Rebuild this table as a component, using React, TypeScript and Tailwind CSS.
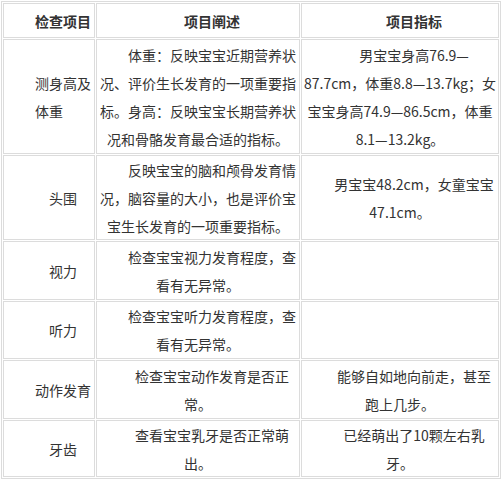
const FONT = { fontFamily: '"Noto Sans CJK SC", "Noto Sans", sans-serif' };

type Cell = string[];

const HEAD: Cell[] = [["检查项目"], ["项目阐述"], ["项目指标"]];

const ROWS: Cell[][] = [
  [
    ["测身高及", "体重"],
    [
      "体重：反映宝宝近期营养状",
      "况、评价生长发育的一项重要指",
      "标。身高：反映宝宝长期营养状",
      "况和骨骼发育最合适的指标。",
    ],
    [
      "男宝宝身高76.9—",
      "87.7cm，体重8.8—13.7kg；女",
      "宝宝身高74.9—86.5cm，体重",
      "8.1—13.2kg。",
    ],
  ],
  [
    ["头围"],
    [
      "反映宝宝的脑和颅骨发育情",
      "况，脑容量的大小，也是评价宝",
      "宝生长发育的一项重要指标。",
    ],
    ["男宝宝48.2cm，女童宝宝", "47.1cm。"],
  ],
  [["视力"], ["检查宝宝视力发育程度，查", "看有无异常。"], []],
  [["听力"], ["检查宝宝听力发育程度，查", "看有无异常。"], []],
  [["动作发育"], ["检查宝宝动作发育是否正", "常。"], ["能够自如地向前走，甚至", "跑上几步。"]],
  [["牙齿"], ["查看宝宝乳牙是否正常萌", "出。"], ["已经萌出了10颗左右乳", "牙。"]],
];

function TableCell({ lines, bold }: { lines: Cell; bold?: boolean }) {
  return (
    <div className="border border-[#dcdcdc] overflow-hidden flex flex-col justify-center">
      <p
        className={
          "text-center indent-[2em] whitespace-nowrap text-[14px] leading-[28px] text-[#333] " +
          (bold ? "font-bold" : "font-normal")
        }
      >
        {lines.map((l, i) => (
          <span key={i}>
            {i > 0 && <br />}
            {l}
          </span>
        ))}
      </p>
    </div>
  );
}

export default function App() {
  return (
    <div className="w-[502px] h-[481px] bg-white pl-[1px] pt-[1px]" style={FONT}>
      <div className="w-[500px] border border-[#dcdcdc] p-[1px] grid grid-cols-[92px_204px_198px] grid-rows-[35px_115px_85px_59px_58px_59px_57px] gap-[1px]">
        {HEAD.map((c, i) => (
          <TableCell key={"h" + i} lines={c} bold />
        ))}
        {ROWS.map((row, r) =>
          row.map((c, i) => <TableCell key={r + "-" + i} lines={c} />)
        )}
      </div>
    </div>
  );
}
